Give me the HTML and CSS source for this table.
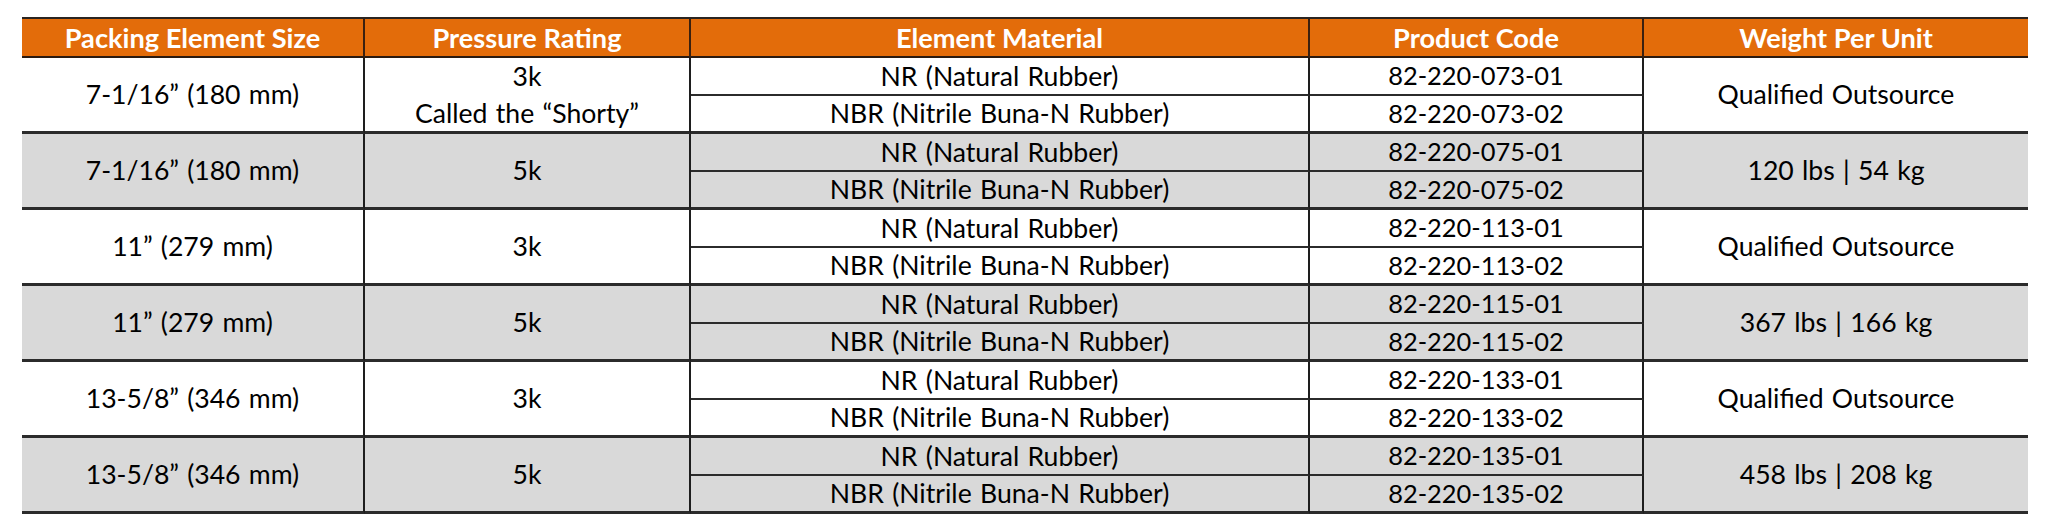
FILE: index.html
```html
<!DOCTYPE html>
<html lang="en">
<head>
<meta charset="utf-8">
<title>Packing Elements</title>
<link rel="stylesheet" href="styles.css">
</head>
<body>
<div class="table">
  <div class="cell head">Packing Element Size</div>
  <div class="cell head">Pressure Rating</div>
  <div class="cell head">Element Material</div>
  <div class="cell head">Product Code</div>
  <div class="cell head last">Weight Per Unit</div>

  <div class="cell span">7-1/16” (180 mm)</div>
  <div class="cell span two"><span>3k</span><span>Called the “Shorty”</span></div>
  <div class="cell sub">NR (Natural Rubber)</div>
  <div class="cell sub code">82-220-073-01</div>
  <div class="cell span last">Qualified Outsource</div>
  <div class="cell end">NBR (Nitrile Buna-N Rubber)</div>
  <div class="cell end code">82-220-073-02</div>

  <div class="cell span gray">7-1/16” (180 mm)</div>
  <div class="cell span gray">5k</div>
  <div class="cell sub gray">NR (Natural Rubber)</div>
  <div class="cell sub gray code">82-220-075-01</div>
  <div class="cell span gray last">120 lbs | 54 kg</div>
  <div class="cell end gray">NBR (Nitrile Buna-N Rubber)</div>
  <div class="cell end gray code">82-220-075-02</div>

  <div class="cell span">11” (279 mm)</div>
  <div class="cell span">3k</div>
  <div class="cell sub">NR (Natural Rubber)</div>
  <div class="cell sub code">82-220-113-01</div>
  <div class="cell span last">Qualified Outsource</div>
  <div class="cell end">NBR (Nitrile Buna-N Rubber)</div>
  <div class="cell end code">82-220-113-02</div>

  <div class="cell span gray">11” (279 mm)</div>
  <div class="cell span gray">5k</div>
  <div class="cell sub gray">NR (Natural Rubber)</div>
  <div class="cell sub gray code">82-220-115-01</div>
  <div class="cell span gray last">367 lbs | 166 kg</div>
  <div class="cell end gray">NBR (Nitrile Buna-N Rubber)</div>
  <div class="cell end gray code">82-220-115-02</div>

  <div class="cell span">13-5/8” (346 mm)</div>
  <div class="cell span">3k</div>
  <div class="cell sub">NR (Natural Rubber)</div>
  <div class="cell sub code">82-220-133-01</div>
  <div class="cell span last">Qualified Outsource</div>
  <div class="cell end">NBR (Nitrile Buna-N Rubber)</div>
  <div class="cell end code">82-220-133-02</div>

  <div class="cell span gray">13-5/8” (346 mm)</div>
  <div class="cell span gray">5k</div>
  <div class="cell sub gray">NR (Natural Rubber)</div>
  <div class="cell sub gray code">82-220-135-01</div>
  <div class="cell span gray last">458 lbs | 208 kg</div>
  <div class="cell end gray">NBR (Nitrile Buna-N Rubber)</div>
  <div class="cell end gray code">82-220-135-02</div>
</div>
</body>
</html>
```
FILE: styles.css
```css
html, body {
  margin: 0;
  padding: 0;
  background: #ffffff;
}

body {
  padding: 17px 0 0 22px;
  font-family: Lato, "Liberation Sans", sans-serif;
  font-size: 26.6px;
  word-spacing: 1.5px;
  color: #000000;
}

.table {
  display: grid;
  width: 2006px;
  grid-template-columns: 343px 326px 619px 334px 384px;
  grid-template-rows: 39px repeat(12, 38px);
  border-top: 2px solid #2a2420;
}

.cell {
  box-sizing: border-box;
  display: flex;
  align-items: center;
  justify-content: center;
  text-align: center;
  border-right: 2px solid #1e1e1e;
  background: #ffffff;
  line-height: 1;
  white-space: nowrap;
}

.cell.last {
  border-right: none;
}

.head {
  background: #e36c0a;
  color: #ffffff;
  font-weight: 700;
  font-size: 27.2px;
  word-spacing: 0;
  border-bottom: 2px solid #2a1a10;
  border-right-color: #3a2010;
}

.code {
  font-size: 25.4px;
}

.span {
  grid-row: span 2;
  border-bottom: 3px solid #2b2b2b;
}

.sub {
  border-bottom: 2px solid #2b2b2b;
}

.end {
  border-bottom: 3px solid #2b2b2b;
}

.two {
  flex-direction: column;
  gap: 10px;
}

.gray {
  background: #d9d9d9;
}
```
